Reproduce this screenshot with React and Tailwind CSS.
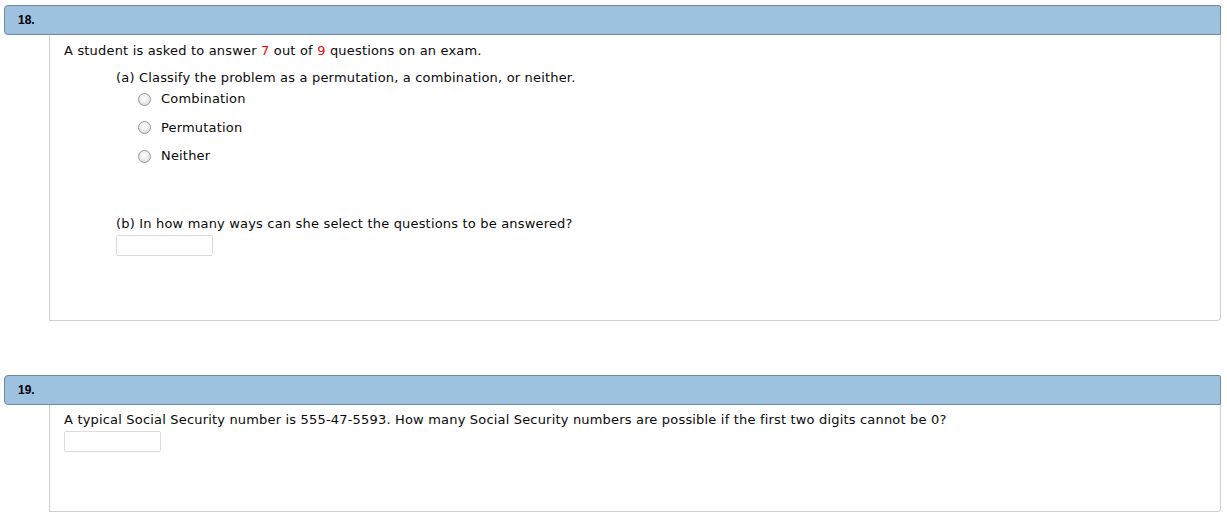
import React from "react";

function Radio({ label }) {
  return (
    <div className="flex items-center h-[16px]">
      <span className="ml-[22px] w-[13px] h-[13px] rounded-full border border-[#9a9a9a] bg-[radial-gradient(circle_at_50%_40%,#ffffff_0%,#eeeeee_45%,#cfcfcf_100%)]" />
      <span className="ml-[10px]">{label}</span>
    </div>
  );
}

function Header({ num }) {
  return (
    <div className="ml-[4px] mr-[6px] h-[30px] bg-[#9dc1df] border border-[#6f8ba4] rounded-l-[4px] rounded-tr-[2px] flex items-center pl-[13px]">
      <span className="font-['Liberation_Sans',Arial,sans-serif] font-bold text-[12px] tracking-normal text-black">{num}</span>
    </div>
  );
}

export default function App() {
  return (
    <div className="w-[1227px] h-[519px] bg-white pt-[5px] font-['DejaVu_Sans',Verdana,sans-serif] text-[13px] leading-[16px] tracking-[0.18px] text-[#0a0a0a]">
      <Header num="18." />
      <div className="ml-[49px] mr-[6px] h-[286px] border-l border-r border-b border-[#cfcfcf] rounded-br-[4px] pl-[14px] pt-[8px]">
        <div className="h-[16px]">
          A student is asked to answer <span className="text-[#ff0000]">7</span> out of{" "}
          <span className="text-[#ff0000]">9</span> questions on an exam.
        </div>
        <div className="ml-[52px] mt-[11px]">
          <div className="h-[16px]">(a) Classify the problem as a permutation, a combination, or neither.</div>
          <div className="mt-[5px] flex flex-col gap-[12.5px]">
            <Radio label="Combination" />
            <Radio label="Permutation" />
            <Radio label="Neither" />
          </div>
          <div className="h-[16px] mt-[52px]">(b) In how many ways can she select the questions to be answered?</div>
          <div className="mt-[3px] w-[97px] h-[21px] border border-[#dcdcdc] rounded-[2px] bg-white" />
        </div>
      </div>
      <div className="h-[54px]" />
      <Header num="19." />
      <div className="ml-[49px] mr-[6px] h-[107px] border-l border-r border-b border-[#cfcfcf] rounded-br-[4px] pl-[14px] pt-[7px]">
        <div className="h-[16px]">
          A typical Social Security number is 555-47-5593. How many Social Security numbers are possible if the first two digits cannot be 0?
        </div>
        <div className="mt-[3px] w-[97px] h-[21px] border border-[#dcdcdc] rounded-[2px] bg-white" />
      </div>
    </div>
  );
}
